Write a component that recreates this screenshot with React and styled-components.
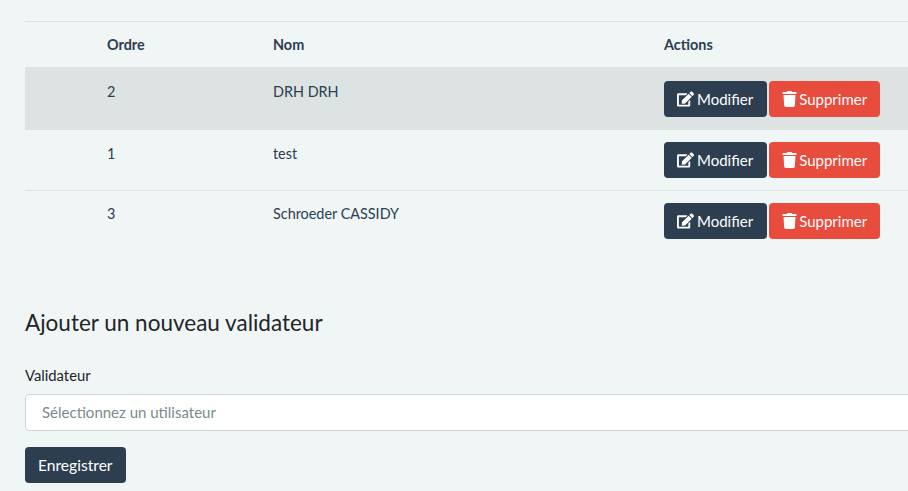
import React from "react";
import styled, { createGlobalStyle } from "styled-components";
import { FaEdit, FaTrash } from "react-icons/fa";

const Global = createGlobalStyle`
  html, body { margin: 0; padding: 0; background: #f0f5f6; overflow: hidden; }
  body { font-family: Lato, "Liberation Sans", sans-serif; font-size: 14.4px; line-height: 21px; color: #212529; }
`;

const Page = styled.div`
  width: 908px;
  height: 491px;
  overflow: hidden;
  padding: 21px 0 0 25px;
  box-sizing: border-box;
`;

const Table = styled.div`
  width: 1000px;
  border-top: 1px solid #dee2e6;
`;

const Row = styled.div`
  display: grid;
  grid-template-columns: 70px 166px 391px 1fr;
  height: ${p => p.$height}px;
  box-sizing: border-box;
  background: ${p => p.$striped ? "#dde2e3" : "transparent"};
  border-top: ${p => p.$line ? "1px solid #dee2e6" : "0"};
`;

const Cell = styled.div`
  padding: ${p => p.$top}px 12px 0;
  font-weight: ${p => p.$head ? 700 : 400};
  color: #2c3e50;
`;

const Actions = styled.div`
  padding: ${p => p.$top}px 12px 0;
  display: flex;
  gap: 2px;
  align-items: flex-start;
`;

const Button = styled.button`
  display: inline-flex;
  align-items: center;
  height: 36px;
  padding: 0 13px;
  border: 0;
  border-radius: 4px;
  background: #2c3e50;
  color: #fff;
  font-family: Lato, "Liberation Sans", sans-serif;
  font-size: 15px;
  line-height: 22px;
  white-space: nowrap;
`;

const EditButton = styled(Button)`
  padding-right: 14px;
  svg { width: 17px; height: 16px; margin-right: 3px; flex: none; }
`;

const DeleteButton = styled(Button)`
  background: #e74c3c;
  svg { width: 15px; height: 16px; margin-right: 2px; flex: none; }
`;

const SaveButton = styled(Button)`
  font-size: 15.6px;
`;

const Title = styled.h4`
  margin: 58px 0 0;
  font-size: 22.5px;
  font-weight: 400;
  line-height: 27px;
  color: #212529;
`;

const Label = styled.label`
  display: block;
  margin-top: 29px;
  font-size: 14.8px;
  line-height: 21px;
  color: #212529;
`;

const Select = styled.div`
  margin-top: 8px;
  width: 1000px;
  height: 37px;
  box-sizing: border-box;
  border: 1px solid #ced4da;
  border-radius: 4px;
  background: #fff;
  padding-left: 16px;
  display: flex;
  align-items: center;
  font-size: 15px;
  color: #7b8a8b;
`;

const Footer = styled.div`
  margin-top: 16px;
`;

const rows = [
  { o: "2", n: "DRH DRH", striped: true, height: 63, text: 14, btn: 14 },
  { o: "1", n: "test", height: 60, text: 13, btn: 12 },
  { o: "3", n: "Schroeder CASSIDY", line: true, height: 61, text: 12, btn: 12 },
];

export default function App() {
  return (
    <Page>
      <Global />
      <Table>
        <Row $height={45}>
          <Cell $head $top={12} />
          <Cell $head $top={12}>Ordre</Cell>
          <Cell $head $top={12}>Nom</Cell>
          <Cell $head $top={12}>Actions</Cell>
        </Row>
        {rows.map(r => (
          <Row key={r.o} $striped={r.striped} $line={r.line} $height={r.height}>
            <Cell $top={r.text} />
            <Cell $top={r.text}>{r.o}</Cell>
            <Cell $top={r.text}>{r.n}</Cell>
            <Actions $top={r.btn}>
              <EditButton><FaEdit />Modifier</EditButton>
              <DeleteButton><FaTrash />Supprimer</DeleteButton>
            </Actions>
          </Row>
        ))}
      </Table>
      <Title>Ajouter un nouveau validateur</Title>
      <Label>Validateur</Label>
      <Select>Sélectionnez un utilisateur</Select>
      <Footer><SaveButton>Enregistrer</SaveButton></Footer>
    </Page>
  );
}
